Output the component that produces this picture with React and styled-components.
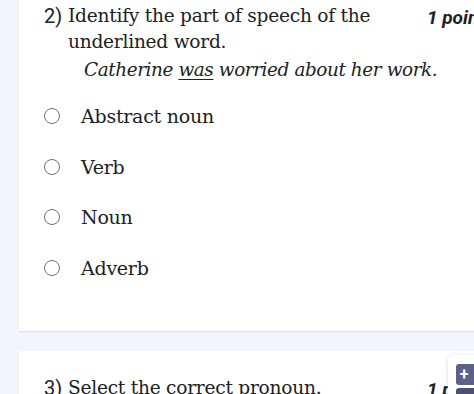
import React from "react";
import styled, { createGlobalStyle } from "styled-components";

const GlobalStyle = createGlobalStyle`
  html, body {
    margin: 0;
    padding: 0;
    background: #f4f4fb;
    overflow: hidden;
  }
`;

const Page = styled.div`
  position: relative;
  width: 474px;
  height: 394px;
  overflow: hidden;
  padding-left: 19px;
  box-sizing: border-box;
  display: flex;
  flex-direction: column;
  gap: 20px;
`;

const Card = styled.div`
  background: #fff;
  width: 520px;
  flex-shrink: 0;
  height: ${({ h }) => h}px;
  box-shadow: 0 1px 1px rgba(60, 64, 90, 0.12);
  box-sizing: border-box;
  padding: ${({ pt }) => pt}px 0 0 25px;
`;

const Header = styled.div`
  display: flex;
  align-items: flex-start;
`;

const Number = styled.span`
  font-family: Roboto, "Liberation Sans", sans-serif;
  font-size: 20px;
  color: #202124;
  line-height: 26px;
  width: 24px;
  flex-shrink: 0;
`;

const Title = styled.div`
  font-family: "DejaVu Serif", serif;
  font-size: 18.6px;
  letter-spacing: -0.25px;
  color: #202124;
  line-height: 26px;
  width: 326px;
`;

const Points = styled.span`
  font-family: Roboto, "Liberation Sans", sans-serif;
  font-weight: 700;
  font-style: italic;
  font-size: 19px;
  color: #202124;
  line-height: 26px;
  margin-left: 33px;
  margin-top: 2px;
  white-space: nowrap;
`;

const Sentence = styled.div`
  font-family: "DejaVu Serif", serif;
  font-style: italic;
  font-size: 18.4px;
  letter-spacing: -0.4px;
  color: #202124;
  line-height: 28px;
  padding-left: 40px;
  margin-top: 1px;

  u {
    text-decoration-thickness: 1px;
    text-underline-offset: 3px;
  }
`;

const Options = styled.div`
  display: flex;
  flex-direction: column;
  margin-top: 7px;
`;

const Option = styled.label`
  display: flex;
  align-items: center;
  height: 50.5px;
  gap: 21px;
`;

const Radio = styled.span`
  width: 14px;
  height: 14px;
  border: 1.6px solid #6f6f6f;
  border-radius: 50%;
  flex-shrink: 0;
`;

const OptionText = styled.span`
  font-family: "DejaVu Serif", serif;
  font-size: 19px;
  letter-spacing: -0.25px;
  color: #202124;
`;

const Tools = styled.div`
  position: absolute;
  left: 448px;
  top: 355px;
  width: 40px;
  height: 60px;
  background: #fff;
  border-radius: 6px;
  box-shadow: 0 1px 4px rgba(60, 64, 90, 0.2);
  box-sizing: border-box;
  padding: 9px 0 0 8px;
  display: flex;
  flex-direction: column;
  gap: 3px;
`;

const ToolButton = styled.div`
  width: 22px;
  height: 21px;
  border-radius: 3px;
  background: ${({ dark }) => (dark ? "#4b4f73" : "#5d6187")};
  color: #fff;
  display: flex;
  align-items: center;
  justify-content: center;
  font-family: Roboto, sans-serif;
  font-weight: 700;
  font-size: 16px;
  padding-right: 6px;
  box-sizing: border-box;
`;

const options = ["Abstract noun", "Verb", "Noun", "Adverb"];

export default function App() {
  return (
    <>
      <GlobalStyle />
      <Page>
        <Card h={331} pt={3}>
          <Header>
            <Number>2)</Number>
            <Title>Identify the part of speech of the underlined word.</Title>
            <Points>1 point</Points>
          </Header>
          <Sentence>
            Catherine <u>was</u> worried about her work.
          </Sentence>
          <Options>
            {options.map((o) => (
              <Option key={o}>
                <Radio />
                <OptionText>{o}</OptionText>
              </Option>
            ))}
          </Options>
        </Card>
        <Card h={200} pt={24}>
          <Header>
            <Number>3)</Number>
            <Title>Select the correct pronoun.</Title>
            <Points>1 point</Points>
          </Header>
        </Card>
        <Tools>
          <ToolButton>+</ToolButton>
          <ToolButton dark />
        </Tools>
      </Page>
    </>
  );
}
